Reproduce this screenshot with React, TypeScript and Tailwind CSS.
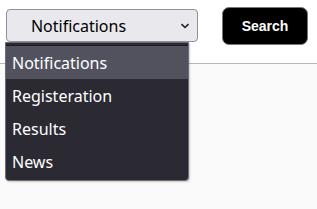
import React from "react";

const options = ["Notifications", "Registeration", "Results", "News"];

export default function App() {
  return (
    <div className="relative w-[317px] h-[209px] bg-[#fafafa] font-['Noto_Sans',sans-serif] overflow-hidden">
      <div className="bg-white h-[64px] border-b border-[#b8b8b8] flex items-start pt-[7px]">
        <div className="ml-[6px] mt-[2px] w-[192px] h-[33px] rounded-[4px] border border-[#8f8f9d] bg-[#e9e9ed] flex items-center">
          <span className="flex-1 text-center text-[16px] text-black pr-[30px]">Notifications</span>
          <svg width="10" height="6" viewBox="0 0 10 6" className="mr-[7px]">
            <path d="M1.5 1.2 L5 4.5 L8.5 1.2" fill="none" stroke="#222" strokeWidth="1.6" />
          </svg>
        </div>
        <button className="ml-[24px] w-[86px] h-[38px] rounded-[7px] bg-black border border-[#777] text-white font-bold text-[14px] font-['Liberation_Sans',sans-serif]">
          Search
        </button>
      </div>
      {/* open select list */}
      <div className="absolute left-[5px] top-[42px] w-[184px] h-[139px] bg-[#2b2a33] border border-[#6e6d75] rounded-b-[4px] pt-[2px] shadow-[1px_1px_2px_rgba(0,0,0,0.2)]">
        <div className="border-t border-[#1c1b22]" />
        {options.map((o, i) => (
          <div
            key={o}
            className={
              "h-[33px] px-[6px] flex items-center text-[16px] text-white " +
              (i === 0 ? "bg-[#52525e]" : "")
            }
          >
            {o}
          </div>
        ))}
      </div>
    </div>
  );
}
